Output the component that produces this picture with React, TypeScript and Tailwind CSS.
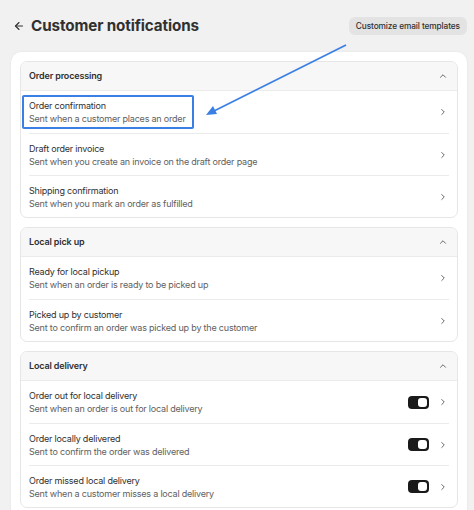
import { ArrowLeft, ChevronRight, ChevronUp } from 'lucide-react';

type Item = { title: string; desc: string; toggle?: boolean; highlight?: boolean };

const sections: { name: string; items: Item[] }[] = [
  {
    name: 'Order processing',
    items: [
      { title: 'Order confirmation', desc: 'Sent when a customer places an order', highlight: true },
      { title: 'Draft order invoice', desc: 'Sent when you create an invoice on the draft order page' },
      { title: 'Shipping confirmation', desc: 'Sent when you mark an order as fulfilled' },
    ],
  },
  {
    name: 'Local pick up',
    items: [
      { title: 'Ready for local pickup', desc: 'Sent when an order is ready to be picked up' },
      { title: 'Picked up by customer', desc: 'Sent to confirm an order was picked up by the customer' },
    ],
  },
  {
    name: 'Local delivery',
    items: [
      { title: 'Order out for local delivery', desc: 'Sent when an order is out for local delivery', toggle: true },
      { title: 'Order locally delivered', desc: 'Sent to confirm the order was delivered', toggle: true },
      { title: 'Order missed local delivery', desc: 'Sent when a customer misses a local delivery', toggle: true },
    ],
  },
];

function Toggle() {
  return (
    <div className="w-[21px] h-[13px] rounded-[4px] bg-[#1a1a1a] flex items-center justify-end pr-[2px]">
      <div className="w-[9px] h-[9px] rounded-[3px] bg-white"></div>
    </div>
  );
}

export default function App() {
  return (
    <div
      className="relative w-[474px] h-[510px] overflow-hidden bg-[#f1f1f1] text-[#303030]"
      style={{ fontFamily: 'Inter, "Noto Sans", sans-serif' }}
    >
      {/* Header */}
      <div className="flex items-center h-[52px] pl-[13px] pr-[7px]">
        <ArrowLeft className="w-[12px] h-[12px] text-[#303030]" strokeWidth={2.2} />
        <h1 className="ml-[6px] text-[15.2px] font-bold tracking-[-0.1px]">Customer notifications</h1>
        <button className="ml-auto h-[18px] px-[7px] rounded-[6px] bg-[#e3e3e3] text-[8.3px] font-medium tracking-[-0.1px] text-[#303030]">
          Customize email templates
        </button>
      </div>

      {/* Outer card */}
      <div className="ml-[11px] mr-[7px] bg-white rounded-t-[10px] px-[9px] pt-[9px] pb-[10px] flex flex-col gap-[9px] shadow-[0_0_2px_rgba(0,0,0,0.08)]">
        {sections.map((s) => (
          <div key={s.name} className="border border-[#e6e6e6] rounded-[7px] overflow-hidden">
            <div className="h-[29px] bg-[#f7f7f7] border-b border-[#ebebeb] flex items-center justify-between pl-[8px] pr-[9px]">
              <span className="text-[9px] font-semibold tracking-[-0.15px]">{s.name}</span>
              <ChevronUp className="w-[10px] h-[10px] text-[#4a4a4a]" strokeWidth={2} />
            </div>
            <div className="px-[8px]">
              {s.items.map((it, i) => (
                <div
                  key={it.title}
                  className={`relative h-[42px] flex items-center ${i > 0 ? 'border-t border-[#ebebeb]' : ''}`}
                >
                  <div className="flex flex-col leading-[13px] tracking-[-0.2px]">
                    <span className="text-[9px] text-[#303030]">{it.title}</span>
                    <span className="text-[9px] text-[#616161]">{it.desc}</span>
                  </div>
                  <div className="ml-auto flex items-center gap-[9px] pr-[1px]">
                    {it.toggle && <Toggle />}
                    <ChevronRight className="w-[10px] h-[10px] text-[#4a4a4a]" strokeWidth={2} />
                  </div>
                  {it.highlight && (
                    <div className="absolute left-[-7px] top-[4px] w-[172px] h-[34px] border-2 border-[#3a7fe3] rounded-[2px]"></div>
                  )}
                </div>
              ))}
            </div>
          </div>
        ))}
      </div>

      {/* Annotation arrow */}
      <svg className="absolute left-0 top-0 pointer-events-none" width="474" height="510">
        <line x1="346" y1="45" x2="212" y2="112" stroke="#3a7fe3" strokeWidth="1.8" />
        <polygon points="206,115 213,106 217,114" fill="#3a7fe3" />
      </svg>
    </div>
  );
}
